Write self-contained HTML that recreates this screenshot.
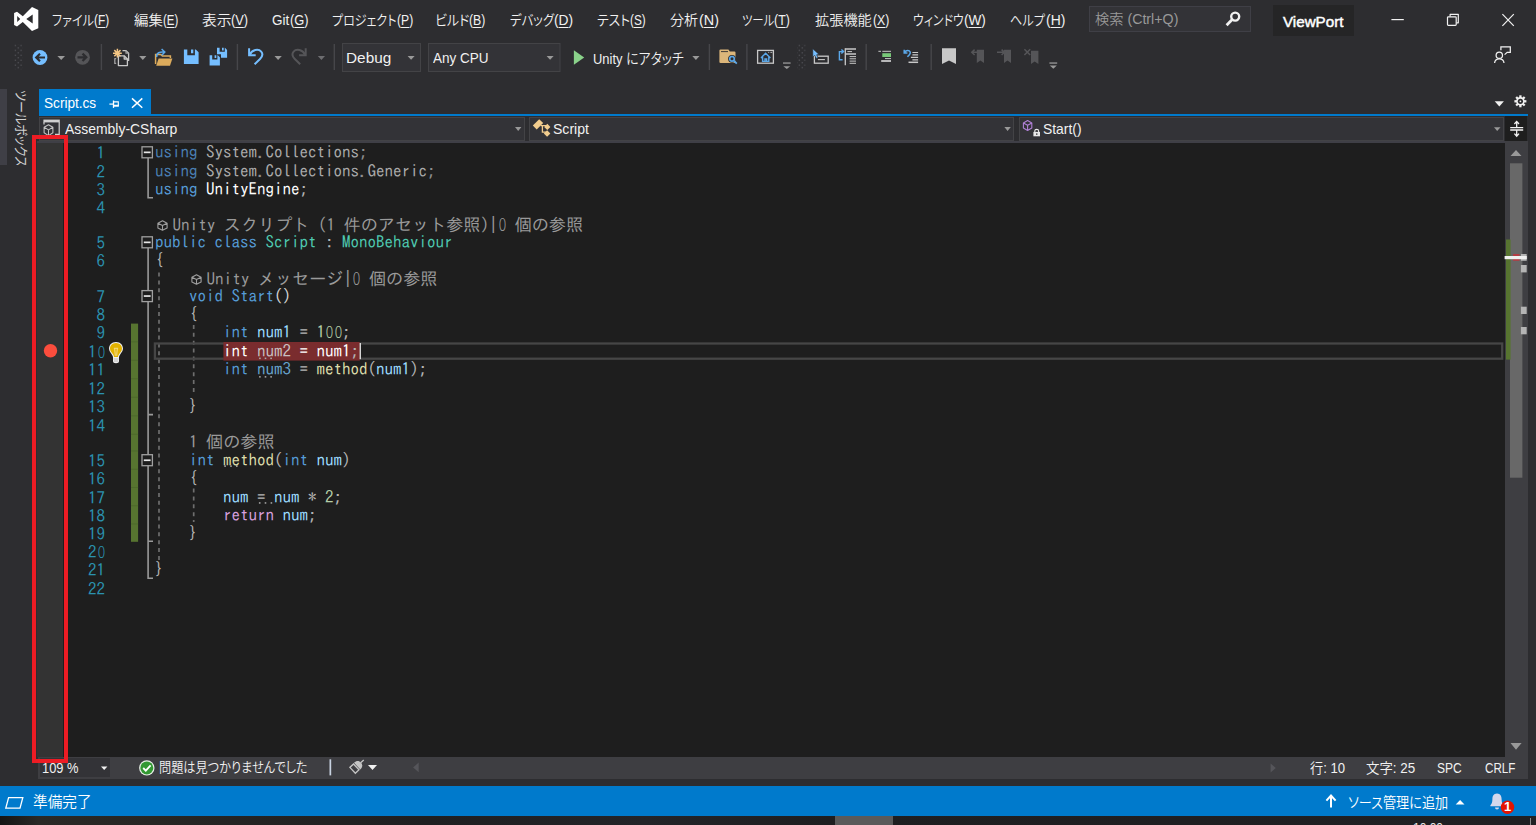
<!DOCTYPE html>
<html lang="ja">
<head>
<meta charset="utf-8">
<title>ViewPort - Microsoft Visual Studio</title>
<style>
*{box-sizing:border-box;margin:0;padding:0}
html,body{width:1536px;height:825px;overflow:hidden;background:#2d2d30}
body{position:relative;font-family:"Liberation Sans","Noto Sans CJK JP",sans-serif;color:#f1f1f1;font-size:15px}
.abs{position:absolute}
/* labels */
.lb{position:absolute;height:22px;line-height:22px;white-space:nowrap;font-feature-settings:"palt" 1;font-weight:350}
.lb span{display:inline-block;transform-origin:0 50%}
.lb u{text-decoration:underline;text-underline-offset:2px;text-decoration-thickness:1px}
/* editor */
#editor{position:absolute;left:37px;top:142.8px;width:1468.3px;height:614.2px;background:#1e1e1e}
#bpmargin{position:absolute;left:37px;top:142.8px;width:26.3px;height:614.2px;background:#333333}
.ln{position:absolute;left:60px;width:45px;text-align:right;font-family:"IPAGothic","Liberation Mono",monospace;font-size:17px;line-height:18.3px;height:18.3px;color:#2b91af;white-space:pre}
.cd{position:absolute;left:155px;font-family:"IPAGothic","Liberation Mono",monospace;font-size:17px;line-height:18.3px;height:18.3px;color:#dcdcdc;white-space:pre}
.cl{position:absolute;font-family:"IPAGothic","Liberation Mono",monospace;font-size:17.12px;line-height:18.3px;height:18.3px;color:#9a9a9a;white-space:pre}
.cl .cube{position:absolute;left:0.3px;top:3.2px}
.z{display:inline-block;width:8.5px;text-align:center;line-height:0}.z i{display:inline-block;font-style:normal;font-family:"Noto Sans CJK JP",sans-serif;font-weight:300;transform:scale(.82,.98)}
.k{color:#569cd6}.t{color:#4ec9b0}.v{color:#9cdcfe}.m{color:#dcdcaa}.ms{color:#569cd6}.n{color:#b5cea8}.p{color:#b4b4b4}.i{color:#ababab}.fk{color:#4b80b4}.fp{color:#8e8e8e}.w{color:#ffffff}.p2{color:#d4d4d4}.r{color:#d8a0df}.f{color:#68a5cf}
.nav{top:116.6px;height:24.6px;background:#333337;border:1.2px solid #434346}
.hl .f{color:#c9c0c1}
</style>
</head>
<body>
<!-- ===== title bar ===== -->
<svg class="abs" style="left:0;top:0" width="50" height="38" viewBox="0 0 50 38"><path fill="#ffffff" fill-rule="evenodd" d="M32 7 L38.3 9.9 V28.2 L32 31 L22.8 21.9 L17 26.5 L14.1 24.9 V12.9 L17 11.8 L22.8 16.2 Z M32.7 14.4 L26.3 19 L32.7 23.6 Z M17.2 16 L20.2 19 L17.2 22.1 Z"/></svg>
<div class="abs" style="left:1089px;top:6px;width:162px;height:26px;background:#333337;border:1px solid #3f3f46"></div>
<svg class="abs" style="left:1224.2px;top:9.6px" width="18" height="18" viewBox="0 0 18 18"><circle cx="11.2" cy="6.6" r="4" fill="none" stroke="#f1f1f1" stroke-width="2.4"/><path d="M8.2 9.6 L2.6 15.2" stroke="#f1f1f1" stroke-width="2.8" stroke-linecap="butt"/></svg>
<div class="abs" style="left:1273px;top:5px;width:81px;height:31px;background:#252526"></div>
<svg class="abs" style="left:1385px;top:8px" width="140" height="24" viewBox="1385 8 140 24"><g fill="none" stroke="#f1f1f1" stroke-width="1.2"><path d="M1391.4 19.6 H1403.8"/><rect x="1447.5" y="16.8" width="8.7" height="8.6" rx="0.8"/><path d="M1450.1 16.6 V14.4 H1458.3 V22.8 H1456.4" stroke-linejoin="round"/><path d="M1502.4 14.2 L1513.8 25.8 M1513.8 14.2 L1502.4 25.8"/></g></svg>
<svg class="abs" style="left:1490px;top:42px" width="26" height="26" viewBox="1490 42 26 26"><g fill="none" stroke="#f1f1f1" stroke-width="1.25"><circle cx="1499.3" cy="55.2" r="3.2"/><path d="M1494.6 63 C1494.8 60 1496.8 58.9 1499.3 58.9 C1501.8 58.9 1503.8 60 1504 63"/><path d="M1500.9 50.2 V46.8 H1510.3 V52.3 H1507.2 L1504.6 54.6"/></g></svg>

<!--TOOLBAR_BEGIN--><!-- ===== toolbar ===== -->
<svg class="abs" style="left:0;top:38px" width="1100" height="40" viewBox="0 38 1100 40">
<defs>
<pattern id="grip" x="14.2" y="44.3" width="5.6" height="4.9" patternUnits="userSpaceOnUse"><rect x="0.6" y="0.6" width="1.3" height="1.3" fill="#505055"/><rect x="3.4" y="3" width="1.3" height="1.3" fill="#505055"/></pattern>
</defs>
<!-- grips -->
<g fill="#505055">
<rect x="14.2" y="44.3" width="8.4" height="25" fill="url(#grip)"/>
<rect x="797" y="44.3" width="8.4" height="25" fill="url(#grip)"/>
</g>
<!-- separators -->
<g fill="#46464a"><rect x="100.7" y="44" width="1.4" height="26"/><rect x="236.7" y="44" width="1.4" height="26"/><rect x="333.6" y="44" width="1.4" height="26"/><rect x="708.7" y="44" width="1.4" height="26"/><rect x="746.2" y="44" width="1.4" height="26"/><rect x="865.5" y="44" width="1.4" height="26"/><rect x="930.5" y="44" width="1.4" height="26"/></g>
<!-- back / forward -->
<circle cx="40" cy="57.5" r="7.4" fill="#75beff"/>
<path d="M45 57.5 H36.6 M40 53.8 L36.2 57.5 L40 61.2" fill="none" stroke="#2d2d30" stroke-width="2.2"/>
<circle cx="82.5" cy="57.3" r="7.4" fill="#555558"/>
<path d="M77.5 57.3 H85.9 M82.5 53.6 L86.3 57.3 L82.5 61" fill="none" stroke="#2d2d30" stroke-width="2.2"/>
<!-- dropdown arrows -->
<g fill="#999999"><path d="M57.4 56 H65 L61.2 59.9 Z"/><path d="M139.2 56 H146.4 L142.8 59.9 Z"/><path d="M274.5 56 H281.8 L278.1 59.9 Z"/><path d="M692.3 56 H699.5 L695.9 59.9 Z"/></g>
<path d="M317.8 56 H325 L321.4 59.9 Z" fill="#6d6d70"/>
<!-- new item -->
<g fill="none" stroke="#c8c8c8" stroke-width="1.3" stroke-linejoin="round"><path d="M122.5 50.6 H126 L128.6 53.2 V61"/><path d="M126 50.6 V53.2 H128.6" stroke="#a0a0a0"/><path d="M118.4 55.8 H124.2 L127.4 59 V65.6 H118.4 Z"/><path d="M124.2 55.8 V59 H127.4"/><path d="M116.2 58.6 H114.8 V63.4 H116.2" stroke="#a0a0a0"/></g>
<g stroke="#f5c684" stroke-width="1.5"><path d="M117.4 48.8 V57.6 M113 53.2 H121.8 M114.3 50.1 L120.5 56.3 M120.5 50.1 L114.3 56.3"/></g>
<!-- open folder -->
<path d="M156.2 65.8 L158.6 58.6 H172.4 L170 65.8 Z" fill="#dcab5c"/>
<path d="M155.6 64 V54.6 H161 L162.4 56 H170.4 V58" fill="none" stroke="#dcab5c" stroke-width="1.5"/>
<path d="M156.8 57 C156 52.8 160 51.6 164.2 52 M161.6 49 L164.8 52 L161.8 55.2" fill="none" stroke="#5ba7e8" stroke-width="1.5"/>
<!-- save -->
<path fill="#75beff" fill-rule="evenodd" d="M183.9 49.4 H195.8 L198.6 52.2 V64 H183.9 Z M187.3 49.4 V55.2 H194.9 V49.4 H193.3 V53.3 H191 V49.4 Z"/>
<!-- save all -->
<path fill="#75beff" fill-rule="evenodd" d="M217 47.8 H225 L227.1 49.9 V57.8 H221 V54.2 H217 Z M219.6 47.8 V51.8 H224.8 V47.8 H223.7 V50.4 H222 V47.8 Z"/>
<path fill="#75beff" fill-rule="evenodd" d="M209.6 55.2 H217.8 L219.9 57.3 V65.4 H209.6 Z M212.2 55.2 V59.4 H217.4 V55.2 H216.3 V58 H214.6 V55.2 Z"/>
<!-- undo / redo -->
<path d="M249.1 48.2 V55.2 H255.7" fill="none" stroke="#75beff" stroke-width="2"/>
<path d="M249.8 54.6 C252 49.6 258.4 48.4 261.2 51.6 C263.4 54.2 262.2 56.8 260 59 L254.6 64.2" fill="none" stroke="#75beff" stroke-width="2"/>
<path d="M305.7 48.2 V55.2 H299.1" fill="none" stroke="#555558" stroke-width="2"/>
<path d="M305 54.6 C302.8 49.6 296.4 48.4 293.6 51.6 C291.4 54.2 292.6 56.8 294.8 59 L300.2 64.2" fill="none" stroke="#555558" stroke-width="2"/>
<!-- combos -->
<rect x="342.5" y="43.5" width="78" height="28" fill="#333337" stroke="#434346"/>
<rect x="428.5" y="43.5" width="131.5" height="28" fill="#333337" stroke="#434346"/>
<path d="M407.6 56 H414.6 L411.1 59.8 Z" fill="#999999"/><path d="M546.6 56 H553.6 L550.1 59.8 Z" fill="#999999"/>
<!-- play -->
<path d="M573.9 50.2 V64.8 L584.2 57.5 Z" fill="#8ad28a"/>
<!-- find in files -->
<path d="M719.4 50.6 Q719.4 49.4 720.6 49.4 H728.4 L729.8 51.4 H734.4 Q735.5 51.4 735.5 52.6 V62 Q735.5 63 734.4 63 H720.6 Q719.4 63 719.4 62 Z" fill="#dcb67a"/>
<path d="M721 51.6 H728" stroke="#2d2d30" stroke-width="0.9"/>
<circle cx="732" cy="58.8" r="3.9" fill="#2d2d30"/>
<circle cx="732" cy="58.8" r="2.3" fill="none" stroke="#5ba7e8" stroke-width="1.6"/><path d="M733.8 60.6 L736.8 63.6" stroke="#5ba7e8" stroke-width="1.8"/>
<!-- home window -->
<rect x="757.6" y="50.4" width="15.8" height="12.8" fill="none" stroke="#c8c8c8" stroke-width="1.3"/>
<path d="M761 58 L765.6 53.2 L770.4 58 M762.6 57 V61.4 H768.8 V57 M765 61.4 V59 H766.6 V61.4" fill="none" stroke="#5ba7e8" stroke-width="1.4"/>
<rect x="768.2" y="51.9" width="1" height="0.9" fill="#c8c8c8"/><rect x="770.4" y="51.9" width="1.8" height="0.9" fill="#c8c8c8"/>
<!-- overflow -->
<g fill="#999999"><rect x="783" y="62.4" width="7.6" height="1.3"/><path d="M783.4 66.2 H790.2 L786.8 69 Z"/><rect x="1049.4" y="62.4" width="7.8" height="1.3"/><path d="M1049.8 65.6 H1056.8 L1053.3 68.8 Z"/></g>
<!-- cursor box -->
<rect x="814.4" y="56.2" width="13.8" height="7" fill="none" stroke="#c8c8c8" stroke-width="1.3"/><path d="M817.9 59.6 H824.9" stroke="#c8c8c8" stroke-width="1.1"/>
<path d="M812.8 48.8 V57 L814.8 55.4 L816.4 58.4 L818 57.6 L816.6 54.8 L819 54.4 Z" fill="#75beff" stroke="#2d2d30" stroke-width="0.6"/>
<!-- list with bracket -->
<g stroke="#c8c8c8" fill="none"><path d="M845.3 48.2 V65.2" stroke-width="1.3"/><path d="M845.3 49 H856 M845.3 54 H856" stroke-width="1.5"/><path d="M847.4 51.6 H852 M849.6 56.6 H856 M849.6 58.8 H856 M849.6 61.1 H856 M849.6 63.3 H856" stroke-width="1"/></g>
<path d="M842.6 59.8 H839.4 V51.6 H843 M841.4 49.6 L843.6 51.6 L841.4 53.6" fill="none" stroke="#5ba7e8" stroke-width="1.4"/>
<!-- indent -->
<g stroke="#c8c8c8"><path d="M878.4 51.3 H881 M882.3 51.3 H891 M885 58.6 H891" stroke-width="1"/><path d="M881.2 61 H891" stroke-width="1.8"/></g><rect x="882.3" y="53.2" width="8.7" height="3.8" fill="#78c878"/>
<!-- undo list -->
<path d="M904.2 49.8 V53 H907.4 M904.6 52.4 C906 49.8 909.4 50 910.2 52 C910.8 53.8 909.4 55 907.4 56.8" fill="none" stroke="#5ba7e8" stroke-width="1.5"/>
<g stroke="#c8c8c8" stroke-width="1.2"><path d="M912.4 52.5 H918.1 M912.4 54.8 H918.1 M910.9 57.3 H918.1 M912.4 59.9 H918.1"/><path d="M908.5 62.3 H918.1" stroke-width="1.5"/></g>
<!-- bookmarks -->
<path d="M942 48.3 H956 V64 L949 60.4 L942 64 Z" fill="#c8c8c8"/>
<g fill="#555558"><path d="M976.8 49.8 H984 V63 L980.4 60.6 L976.8 63 Z"/><path d="M1004 49.8 H1011 V63 L1007.5 60.6 L1004 63 Z"/><path d="M1031 50.8 H1038.4 V64 L1034.7 61.6 L1031 64 Z"/></g>
<g fill="none" stroke="#555558" stroke-width="1.5"><path d="M979 52.3 H972 M974.6 49.6 L971.8 52.3 L974.6 55"/><path d="M997 52.3 H1004.2 M1001.6 49.6 L1004.4 52.3 L1001.6 55"/><path d="M1024.4 49.2 L1030.2 55 M1030.2 49.2 L1024.4 55"/></g>
<path d="M975.4 54 H978.4 V57 H975.4Z M1004.6 49.4 H1002 V52 Z" fill="#2d2d30" opacity="0"/>
</svg>
<!--TOOLBAR_END-->
<!--TABS_BEGIN--><!-- ===== left autohide tab ===== -->
<div class="abs" style="left:0;top:89px;width:7px;height:75.5px;background:#3f3f46"></div>
<!-- ===== document tab ===== -->
<div class="abs" style="left:39px;top:89px;width:112px;height:25px;background:#007acc"></div>
<div class="abs" style="left:39px;top:113.5px;width:1489px;height:2.5px;background:#007acc"></div>
<svg class="abs" style="left:105px;top:95px" width="45" height="18" viewBox="105 95 45 18"><g fill="none" stroke="#ffffff"><path d="M109.4 104.1 H113.3" stroke-width="1.2"/><path d="M113.5 100.5 V107.9" stroke-width="1.3"/><path d="M113.5 101.9 H118.3 V106 H113.5" stroke-width="1.1"/><path d="M113.5 105.6 H118.8" stroke-width="1.7"/><path d="M132 98.4 L142.3 107.8 M142.3 98.4 L132 107.8" stroke-width="1.5"/></g></svg>
<svg class="abs" style="left:1490px;top:94px" width="40" height="16" viewBox="1490 94 40 16"><path d="M1494.7 101.3 H1503.9 L1499.3 106.5 Z" fill="#f1f1f1"/><g transform="translate(1520.4 101.3)"><g fill="#f1f1f1"><rect x="-1.15" y="-6" width="2.3" height="12"/><rect x="-1.15" y="-6" width="2.3" height="12" transform="rotate(45)"/><rect x="-1.15" y="-6" width="2.3" height="12" transform="rotate(90)"/><rect x="-1.15" y="-6" width="2.3" height="12" transform="rotate(135)"/><circle r="4.2"/></g><circle r="2.6" fill="#2d2d30"/><circle r="0.9" fill="#f1f1f1"/></g></svg>
<!-- ===== navigation bar ===== -->
<div class="abs" style="left:37px;top:116px;width:1491px;height:27px;background:#2d2d30"></div>
<div class="abs nav" style="left:39px;width:486.3px"></div>
<div class="abs nav" style="left:529px;width:485.3px"></div>
<div class="abs nav" style="left:1018.5px;width:485.5px"></div>
<div class="abs" style="left:37px;top:140.6px;width:1468.5px;height:2.2px;background:#3f3f46"></div>
<div class="abs" style="left:1505.3px;top:116px;width:22px;height:25.4px;background:#1e1e1e"></div>
<svg class="abs" style="left:1505px;top:116px" width="24" height="26" viewBox="1505 116 24 26"><g fill="none" stroke="#f1f1f1" stroke-width="1.3"><path d="M1510.2 127.6 H1523.2 M1510.2 130 H1523.2"/><path d="M1516.7 127.6 V121.6 M1514.4 124 L1516.7 121.4 L1519 124 M1516.7 130 V136 M1514.4 133.6 L1516.7 136.2 L1519 133.6"/></g></svg>
<svg class="abs" style="left:37px;top:116px" width="1470" height="27" viewBox="37 116 1470 27">
<g fill="#999999"><path d="M515 127 H521.4 L518.2 131 Z"/><path d="M1004.4 127 H1010.8 L1007.6 131 Z"/><path d="M1494 127.2 H1500.5 L1497.2 131.1 Z"/></g>
<!-- assembly icon -->
<rect x="43.4" y="119.6" width="16.4" height="2.8" fill="#d0d0d0"/><path d="M44 122 V124.6 M59.2 122 V134.4 H55" fill="none" stroke="#d0d0d0" stroke-width="1.2"/>
<path d="M48.5 124.8 L52.9 127.3 V132.8 L48.5 135.6 L44.1 132.8 V127.3 Z M44.1 127.3 L48.5 129.9 L52.9 127.3 M48.5 129.9 V135.6" fill="none" stroke="#c4c4c4" stroke-width="1.05" stroke-linejoin="round"/>
<!-- class icon -->
<g fill="#f2cd8e"><path d="M539.2 119.3 L543.2 122.9 L536.7 129.6 L532.8 125.6 Z"/><path d="M547.3 123.8 L550.4 126.9 L547.3 130 L544.2 126.9 Z"/><path d="M547.1 130.3 L550.4 133.5 L547.1 136.8 L543.8 133.5 Z"/></g>
<path d="M540.6 125.6 H546 M542.4 125.6 V132.2 H546" fill="none" stroke="#f2cd8e" stroke-width="1.3"/>
<!-- method icon -->
<g fill="none" stroke="#b180d7" stroke-width="1.1" stroke-linejoin="round"><path d="M1027.6 120.6 L1031.8 122.9 V128 L1027.6 130.4 L1023.4 128 V122.9 Z M1023.4 122.9 L1027.6 125.3 L1031.8 122.9 M1027.6 125.3 V130.4"/></g>
<path d="M1034.8 132 V130.8 Q1034.8 129.4 1036.7 129.4 Q1038.6 129.4 1038.6 130.8 V132" fill="none" stroke="#e8e8e8" stroke-width="1.1"/><rect x="1033.4" y="131.9" width="6.6" height="4.4" fill="#e8e8e8"/><rect x="1036.1" y="133.4" width="1.3" height="1.4" fill="#2d2d30"/>
</svg>
<div class="abs" style="left:6px;top:89px;width:28px;height:76px;overflow:hidden"><div id="tbx" style="position:absolute;left:22px;top:0.6px;transform-origin:0 0;transform:rotate(90deg) scaleX(0.895);white-space:nowrap;font-size:13.5px;line-height:16px;color:#d0d0d0;font-feature-settings:'palt' 1">ツールボックス</div></div>
<!--TABS_END-->
<!-- ===== editor ===== -->
<div id="editor"></div>
<div id="bpmargin"></div>
<!--DECO_BEGIN--><!-- ===== editor decorations ===== -->
<svg class="abs" style="left:37px;top:143px" width="1468" height="614" viewBox="37 143 1468 614">
<!-- change bar -->
<rect x="131" y="323.6" width="7.1" height="218.2" fill="#577430"/><rect x="131" y="341.4" width="7.1" height="0.9" fill="#4d692b"/><rect x="131" y="359.8" width="7.1" height="0.9" fill="#4d692b"/><rect x="131" y="378.3" width="7.1" height="0.9" fill="#4d692b"/><rect x="131" y="396.8" width="7.1" height="0.9" fill="#4d692b"/><rect x="131" y="415.4" width="7.1" height="0.9" fill="#4d692b"/><rect x="131" y="433.8" width="7.1" height="0.9" fill="#4d692b"/><rect x="131" y="450.5" width="7.1" height="0.9" fill="#4d692b"/><rect x="131" y="468.8" width="7.1" height="0.9" fill="#4d692b"/><rect x="131" y="487.1" width="7.1" height="0.9" fill="#4d692b"/><rect x="131" y="505.3" width="7.1" height="0.9" fill="#4d692b"/><rect x="131" y="523.5" width="7.1" height="0.9" fill="#4d692b"/>
<!-- outlining lines -->
<g fill="none" stroke="#9a9a9a" stroke-width="1.6"><path d="M148.1 158 V197.7 H153"/><path d="M148.1 248 V578.2 H153"/><path d="M148.1 414.6 H153 M148.1 541.3 H153"/></g>
<rect x="142" y="146.8" width="10.4" height="11" fill="#1e1e1e" stroke="#a0a0a0" stroke-width="1.3"/><rect x="143.8" y="151.5" width="6.8" height="1.7" fill="#e6e6e6"/><rect x="142" y="236.8" width="10.4" height="11" fill="#1e1e1e" stroke="#a0a0a0" stroke-width="1.3"/><rect x="143.8" y="241.5" width="6.8" height="1.7" fill="#e6e6e6"/><rect x="142" y="290.6" width="10.4" height="11" fill="#1e1e1e" stroke="#a0a0a0" stroke-width="1.3"/><rect x="143.8" y="295.2" width="6.8" height="1.7" fill="#e6e6e6"/><rect x="142" y="454.7" width="10.4" height="11" fill="#1e1e1e" stroke="#a0a0a0" stroke-width="1.3"/><rect x="143.8" y="459.4" width="6.8" height="1.7" fill="#e6e6e6"/>
<!-- indent guides -->
<g fill="none" stroke="#6e6e6e" stroke-width="1.7" stroke-dasharray="4 3.87"><path d="M159 272.6 V562"/><path d="M193.7 325 V393"/><path d="M193.7 488.6 V522"/></g>
<!-- current line -->
<rect x="154.9" y="343.5" width="1347.3" height="15.2" fill="none" stroke="#464646" stroke-width="2.3"/>
<rect x="223.4" y="342" width="136.4" height="18.6" fill="#7a2c2e"/>
<!-- breakpoint -->
<circle cx="50.5" cy="350.7" r="6.7" fill="#fb4d3d"/>
<!-- lightbulb -->
<g><path d="M116 342 C111.4 342 109 345.4 109 348.6 C109 351.4 110.6 352.8 111.8 354.4 C112.8 355.8 113 356.6 113 357.6 V361 Q113 363.2 116 363.2 Q119 363.2 119 361 V357.6 C119 356.6 119.2 355.8 120.2 354.4 C121.4 352.8 123 351.4 123 348.6 C123 345.4 120.6 342 116 342 Z" fill="#efefef"/><path d="M116 343 C112.2 343 110 345.8 110 348.6 C110 351 111.4 352.2 112.6 353.8 C113.6 355.2 114 356 114 357 H118 C118 356 118.4 355.2 119.4 353.8 C120.6 352.2 122 351 122 348.6 C122 345.8 119.8 343 116 343 Z" fill="#e2b200"/><path d="M113.9 348.3 H118.1 M114.7 348.5 L115.3 355.8 M117.3 348.5 L116.7 355.8" stroke="#f6df8c" stroke-width="1" fill="none"/><path d="M113.6 359 H118.4 M114 361 H118" stroke="#b0b0b0" stroke-width="0.8"/></g>
<!-- suggestion dots -->
<g fill="#aaaaaa"><rect x="259.1" y="357.6" width="1.6" height="1.5"/><rect x="264.7" y="357.6" width="1.6" height="1.5"/><rect x="270.3" y="357.6" width="1.6" height="1.5"/><rect x="259.1" y="376.1" width="1.6" height="1.5"/><rect x="264.7" y="376.1" width="1.6" height="1.5"/><rect x="270.3" y="376.1" width="1.6" height="1.5"/><rect x="224.3" y="465.4" width="1.6" height="1.5"/><rect x="230.2" y="465.4" width="1.6" height="1.5"/><rect x="236.0" y="465.4" width="1.6" height="1.5"/><rect x="258.9" y="502.2" width="1.6" height="1.5"/><rect x="264.7" y="502.2" width="1.6" height="1.5"/><rect x="270.6" y="502.2" width="1.6" height="1.5"/></g>
<!-- caret -->
<rect x="359.6" y="343" width="1.3" height="16.2" fill="#e8e8e8"/>
</svg>
<!--DECO_END-->
<div class="ln" style="top:144.35px">1</div>
<div class="cd" style="top:143.35px"><span class="fk">using</span> <span class="i">System</span><span class="fp">.</span><span class="i">Collections</span><span class="fp">;</span></div>
<div class="ln" style="top:162.75px">2</div>
<div class="cd" style="top:161.75px"><span class="fk">using</span> <span class="i">System</span><span class="fp">.</span><span class="i">Collections</span><span class="fp">.</span><span class="i">Generic</span><span class="fp">;</span></div>
<div class="ln" style="top:181.05px">3</div>
<div class="cd" style="top:180.05px"><span class="k">using</span> <span class="w">UnityEngine</span><span class="p">;</span></div>
<div class="ln" style="top:199.15px">4</div>
<div class="ln" style="top:234.25px">5</div>
<div class="cd" style="top:233.25px"><span class="k">public</span> <span class="k">class</span> <span class="t">Script</span> <span class="p">:</span> <span class="t">MonoBehaviour</span></div>
<div class="ln" style="top:252.45px">6</div>
<div class="cd" style="top:251.45px"><span class="p">{</span></div>
<div class="ln" style="top:287.65px">7</div>
<div class="cd" style="top:286.65px">    <span class="k">void</span> <span class="ms">Start</span><span class="p2">()</span></div>
<div class="ln" style="top:305.85px">8</div>
<div class="cd" style="top:304.85px">    <span class="p">{</span></div>
<div class="ln" style="top:324.45px">9</div>
<div class="cd" style="top:323.45px">        <span class="k">int</span> <span class="v">num1</span> <span class="p">=</span> <span class="n">1<span class="z"><i>0</i></span><span class="z"><i>0</i></span></span><span class="p">;</span></div>
<div class="ln" style="top:342.85px">1<span class="z"><i>0</i></span></div>
<div class="cd" style="top:341.85px">        <span class="hl"><span class="w">int</span> <span class="f">num2</span> <span class="w">=</span> <span class="w">num1</span><span class="p">;</span></span></div>
<div class="ln" style="top:361.35px">11</div>
<div class="cd" style="top:360.35px">        <span class="k">int</span> <span class="f">num3</span> <span class="p">=</span> <span class="m">method</span><span class="p">(</span><span class="v">num1</span><span class="p">)</span><span class="p">;</span></div>
<div class="ln" style="top:379.85px">12</div>
<div class="ln" style="top:398.35px">13</div>
<div class="cd" style="top:397.35px">    <span class="p">}</span></div>
<div class="ln" style="top:416.95px">14</div>
<div class="ln" style="top:451.95px">15</div>
<div class="cd" style="top:450.95px">    <span class="k">int</span> <span class="m">method</span><span class="p">(</span><span class="k">int</span> <span class="v">num</span><span class="p">)</span></div>
<div class="ln" style="top:470.15px">16</div>
<div class="cd" style="top:469.15px">    <span class="p">{</span></div>
<div class="ln" style="top:488.55px">17</div>
<div class="cd" style="top:487.55px">        <span class="v">num</span> <span class="p">=</span> <span class="v">num</span> <span class="p">*</span> <span class="n">2</span><span class="p">;</span></div>
<div class="ln" style="top:506.75px">18</div>
<div class="cd" style="top:505.75px">        <span class="r">return</span> <span class="v">num</span><span class="p">;</span></div>
<div class="ln" style="top:524.95px">19</div>
<div class="cd" style="top:523.95px">    <span class="p">}</span></div>
<div class="ln" style="top:543.15px">2<span class="z"><i>0</i></span></div>
<div class="ln" style="top:561.45px">21</div>
<div class="cd" style="top:560.45px"><span class="p">}</span></div>
<div class="ln" style="top:579.75px">22</div>
<div class="cl" style="top:216.05px;left:155.5px"><svg class="cube" width="13" height="13" viewBox="0 0 13 13"><path d="M6.5 1.8 L11.1 4.2 V8.9 L6.5 11.2 L1.9 8.9 V4.2 Z M1.9 4.2 L6.5 6.6 L11.1 4.2 M6.5 6.6 V11.2" fill="none" stroke="#a0a0a0" stroke-width="1.1" stroke-linejoin="round"/></svg><span style="margin-left:17px">Unity スクリプト (1 件のアセット参照)|<span class="z"><i>0</i></span> 個の参照</span></div>
<div class="cl" style="top:269.65px;left:189.5px"><svg class="cube" width="13" height="13" viewBox="0 0 13 13"><path d="M6.5 1.8 L11.1 4.2 V8.9 L6.5 11.2 L1.9 8.9 V4.2 Z M1.9 4.2 L6.5 6.6 L11.1 4.2 M6.5 6.6 V11.2" fill="none" stroke="#a0a0a0" stroke-width="1.1" stroke-linejoin="round"/></svg><span style="margin-left:17px">Unity メッセージ|<span class="z"><i>0</i></span> 個の参照</span></div>
<div class="cl" style="top:433.35px;left:189px">1 個の参照</div>
<!--SCROLL_BEGIN--><!-- ===== vertical scrollbar ===== -->
<div class="abs" style="left:1505.3px;top:141.4px;width:22.8px;height:615.6px;background:#3e3e42"></div>
<svg class="abs" style="left:1503px;top:142px" width="26" height="615" viewBox="1503 142 26 615">
<rect x="1510" y="163.3" width="12.4" height="314.4" fill="#686868"/>
<path d="M1510.5 156 L1516 150 L1521.5 156 Z" fill="#999999"/><path d="M1510.5 743 H1521.6 L1516 749.7 Z" fill="#999999"/>
<rect x="1506" y="239.5" width="4.6" height="120.1" fill="#577430"/>
<g fill="#b4b4b4"><rect x="1520.9" y="254" width="5.8" height="6.8"/><rect x="1520.9" y="265" width="5.8" height="7.4"/><rect x="1520.9" y="306.7" width="5.8" height="7.3"/><rect x="1520.9" y="327" width="5.8" height="7.3"/></g>
<rect x="1513" y="254" width="6.5" height="6.8" fill="#b43c44"/>
<rect x="1504.6" y="256" width="22.2" height="3.2" fill="#f0f0f0"/>
</svg>
<!--SCROLL_END-->
<!--BOTTOM_BEGIN--><!-- ===== editor bottom bar ===== -->
<div class="abs" style="left:37.5px;top:757px;width:1490.6px;height:22.2px;background:#3e3e42"></div>
<div class="abs" style="left:39.8px;top:758.2px;width:70.2px;height:18.6px;background:#333337"></div>
<svg class="abs" style="left:37px;top:757px" width="1491" height="23" viewBox="37 757 1491 23">
<path d="M101 766.5 H107.4 L104.2 770 Z" fill="#f1f1f1"/>
<circle cx="146.8" cy="767.9" r="7.7" fill="#e8f0e8"/><circle cx="146.8" cy="767.9" r="6.5" fill="#339933"/><path d="M143.2 768 L145.8 770.6 L150.6 765.4" fill="none" stroke="#ffffff" stroke-width="1.8"/>
<rect x="329.5" y="759.3" width="1.7" height="16.1" fill="#c8d2e1"/>
<g transform="translate(357 766.2) rotate(47)"><path d="M0 -9.2 V-5" stroke="#c4c4c4" stroke-width="1.3" fill="none"/><path d="M-4.6 -0.2 C-4.6 -3.8 -2.6 -5.4 0 -5.4 C2.6 -5.4 4.6 -3.8 4.6 -0.2 Z" fill="#c4c4c4"/><rect x="-4" y="1" width="8" height="5" fill="none" stroke="#c4c4c4" stroke-width="1.3"/></g>
<path d="M368 765 H377 L372.5 770 Z" fill="#f1f1f1"/>
<path d="M418.7 762.5 V772.2 L413.1 767.4 Z" fill="#55555a"/><path d="M1270.6 763.4 V772.4 L1275.8 767.9 Z" fill="#55555a"/>
</svg>
<!-- ===== status bar ===== -->
<div class="abs" style="left:0;top:786.4px;width:1536px;height:29.6px;background:#007acc"></div>
<svg class="abs" style="left:0;top:786px" width="1536" height="30" viewBox="0 786 1536 30">
<path d="M8.6 797.6 H22.8 L20 808.2 H5.8 Z" fill="none" stroke="#ffffff" stroke-width="1.3"/>
<path d="M1331 807.6 V796 M1326.4 800.6 L1331 795.6 L1335.6 800.6" fill="none" stroke="#ffffff" stroke-width="2"/>
<path d="M1455.7 804.5 H1464.5 L1460.1 800 Z" fill="#ffffff"/>
<path d="M1497 793.6 C1493.6 793.6 1492.4 796.4 1492.4 799.2 C1492.4 802.4 1491.6 803.8 1490.4 805.2 V806.2 H1503.6 V805.2 C1502.4 803.8 1501.6 802.4 1501.6 799.2 C1501.6 796.4 1500.4 793.6 1497 793.6 Z M1495 807.4 A2 2 0 0 0 1499 807.4 Z" fill="#d4d8ec"/>
<circle cx="1507.5" cy="807.3" r="6.7" fill="#e51400"/>
</svg>
<div class="abs" style="left:1503.6px;top:800.1px;width:8px;height:14px;line-height:14px;font-size:13px;font-weight:bold;color:#fff;text-align:center">1</div>
<!-- ===== taskbar strip ===== -->
<div class="abs" style="left:0;top:816px;width:1536px;height:9px;background:linear-gradient(90deg,#151515 0,#2a2926 2.5%,#272624 10%,#1f1f21 28%,#232428 42%,#1e1e20 54%,#202023 100%)"></div>
<div class="abs" style="left:1408px;top:823.2px;width:40px;height:1.8px;overflow:hidden;font-size:12px;line-height:12px;color:#e8e8e8;text-align:center"><span style="position:relative;top:-1.6px">10:00</span></div>
<div class="abs" style="left:835px;top:816px;width:58px;height:9px;background:#5a5a5a"></div>
<div class="abs" style="left:1529.5px;top:818px;width:1.2px;height:7px;background:#8a8a8a"></div>
<!--BOTTOM_END-->
<div class="lb" id="m1a" style="left:51.64px;top:9.00px;font-size:14px;color:#f1f1f1;"><span style="transform:scaleX(0.8638)">ファイル</span></div>
<div class="lb" id="m1b" style="left:93.98px;top:9.30px;font-size:14.5px;color:#f1f1f1;"><span style="transform:scaleX(0.8176)">(<u>F</u>)</span></div>
<div class="lb" id="m2a" style="left:133.80px;top:9.00px;font-size:14px;color:#f1f1f1;"><span style="transform:scaleX(1.0296)">編集</span></div>
<div class="lb" id="m2b" style="left:162.51px;top:9.30px;font-size:14.5px;color:#f1f1f1;"><span style="transform:scaleX(0.7889)">(<u>E</u>)</span></div>
<div class="lb" id="m3a" style="left:201.95px;top:9.00px;font-size:14px;color:#f1f1f1;"><span style="transform:scaleX(1.0538)">表示</span></div>
<div class="lb" id="m3b" style="left:231.22px;top:9.30px;font-size:14.5px;color:#f1f1f1;"><span style="transform:scaleX(0.8833)">(<u>V</u>)</span></div>
<div class="lb" id="m4a" style="left:272.04px;top:9.00px;font-size:14px;color:#f1f1f1;"><span style="transform:scaleX(0.9647)">Git</span></div>
<div class="lb" id="m4b" style="left:290.21px;top:9.30px;font-size:14.5px;color:#f1f1f1;"><span style="transform:scaleX(0.8895)">(<u>G</u>)</span></div>
<div class="lb" id="m5a" style="left:332.14px;top:9.00px;font-size:14px;color:#f1f1f1;"><span style="transform:scaleX(0.8589)">プロジェクト</span></div>
<div class="lb" id="m5b" style="left:396.56px;top:9.30px;font-size:14.5px;color:#f1f1f1;"><span style="transform:scaleX(0.8389)">(<u>P</u>)</span></div>
<div class="lb" id="m6a" style="left:435.14px;top:9.00px;font-size:14px;color:#f1f1f1;"><span style="transform:scaleX(0.9294)">ビルド</span></div>
<div class="lb" id="m6b" style="left:469.46px;top:9.30px;font-size:14.5px;color:#f1f1f1;"><span style="transform:scaleX(0.8444)">(<u>B</u>)</span></div>
<div class="lb" id="m7a" style="left:509.62px;top:9.00px;font-size:14px;color:#f1f1f1;"><span style="transform:scaleX(0.8816)">デバッグ</span></div>
<div class="lb" id="m7b" style="left:554.45px;top:9.30px;font-size:14.5px;color:#f1f1f1;"><span style="transform:scaleX(0.9500)">(<u>D</u>)</span></div>
<div class="lb" id="m8a" style="left:597.08px;top:9.00px;font-size:14px;color:#f1f1f1;"><span style="transform:scaleX(0.9176)">テスト</span></div>
<div class="lb" id="m8b" style="left:630.09px;top:9.30px;font-size:14.5px;color:#f1f1f1;"><span style="transform:scaleX(0.8111)">(<u>S</u>)</span></div>
<div class="lb" id="m9a" style="left:670.00px;top:9.00px;font-size:14px;color:#f1f1f1;"><span style="transform:scaleX(1.0000)">分析</span></div>
<div class="lb" id="m9b" style="left:698.71px;top:9.30px;font-size:14.5px;color:#f1f1f1;"><span style="transform:scaleX(0.9889)">(<u>N</u>)</span></div>
<div class="lb" id="m10a" style="left:741.69px;top:9.00px;font-size:14px;color:#f1f1f1;"><span style="transform:scaleX(0.8105)">ツール</span></div>
<div class="lb" id="m10b" style="left:774.15px;top:9.30px;font-size:14.5px;color:#f1f1f1;"><span style="transform:scaleX(0.8529)">(<u>T</u>)</span></div>
<div class="lb" id="m11a" style="left:815.00px;top:9.00px;font-size:14px;color:#f1f1f1;"><span style="transform:scaleX(1.0143)">拡張機能</span></div>
<div class="lb" id="m11b" style="left:872.65px;top:9.30px;font-size:14.5px;color:#f1f1f1;"><span style="transform:scaleX(0.8500)">(<u>X</u>)</span></div>
<div class="lb" id="m12a" style="left:912.95px;top:9.00px;font-size:14px;color:#f1f1f1;"><span style="transform:scaleX(0.8517)">ウィンドウ</span></div>
<div class="lb" id="m12b" style="left:963.96px;top:9.30px;font-size:14.5px;color:#f1f1f1;"><span style="transform:scaleX(0.9364)">(<u>W</u>)</span></div>
<div class="lb" id="m13a" style="left:1010.13px;top:9.00px;font-size:14px;color:#f1f1f1;"><span style="transform:scaleX(0.8667)">ヘルプ</span></div>
<div class="lb" id="m13b" style="left:1045.54px;top:9.30px;font-size:14.5px;color:#f1f1f1;"><span style="transform:scaleX(0.9611)">(<u>H</u>)</span></div>
<div class="lb" id="srch" style="left:1094.98px;top:8.20px;font-size:14px;color:#999999;"><span style="transform:scaleX(1.0160)">検索 (Ctrl+Q)</span></div>
<div class="lb" id="vp" style="left:1282.80px;top:10.90px;font-size:14.5px;color:#ffffff;-webkit-text-stroke:0.45px #ffffff"><span style="transform:scaleX(1.0466)">ViewPort</span></div>
<div class="lb" id="dbg" style="left:345.98px;top:47.25px;font-size:15px;color:#f1f1f1;"><span style="transform:scaleX(1.0238)">Debug</span></div>
<div class="lb" id="cpu" style="left:433.00px;top:46.75px;font-size:15px;color:#f1f1f1;"><span style="transform:scaleX(0.9016)">Any CPU</span></div>
<div class="lb" id="uni" style="left:593.11px;top:47.75px;font-size:14.5px;color:#f1f1f1;"><span style="transform:scaleX(0.8911)">Unity にアタッチ</span></div>
<div class="lb" id="tab" style="left:43.59px;top:92.10px;font-size:15px;color:#ffffff;"><span style="transform:scaleX(0.9071)">Script.cs</span></div>
<div class="lb" id="nav1" style="left:64.50px;top:117.80px;font-size:15px;color:#f1f1f1;"><span style="transform:scaleX(0.9292)">Assembly-CSharp</span></div>
<div class="lb" id="nav2" style="left:553.06px;top:117.80px;font-size:15px;color:#f1f1f1;"><span style="transform:scaleX(0.9368)">Script</span></div>
<div class="lb" id="nav3" style="left:1042.88px;top:118.40px;font-size:15px;color:#f1f1f1;"><span style="transform:scaleX(0.9250)">Start()</span></div>
<div class="lb" id="zoom" style="left:42.11px;top:757.20px;font-size:14.5px;color:#f1f1f1;"><span style="transform:scaleX(0.8875)">109 %</span></div>
<div class="lb" id="noiss" style="left:159.10px;top:757.30px;font-size:13.5px;color:#f1f1f1;"><span style="transform:scaleX(0.9018)">問題は見つかりませんでした</span></div>
<div class="lb" id="row" style="left:1310.20px;top:757.20px;font-size:14px;color:#f1f1f1;"><span style="transform:scaleX(0.9378)">行: 10</span></div>
<div class="lb" id="col" style="left:1366.14px;top:757.20px;font-size:14px;color:#f1f1f1;"><span style="transform:scaleX(0.9580)">文字: 25</span></div>
<div class="lb" id="spc" style="left:1436.94px;top:757.10px;font-size:14px;color:#f1f1f1;"><span style="transform:scaleX(0.8593)">SPC</span></div>
<div class="lb" id="crlf" style="left:1484.87px;top:757.10px;font-size:14px;color:#f1f1f1;"><span style="transform:scaleX(0.8343)">CRLF</span></div>
<div class="lb" id="rdy" style="left:33.39px;top:791.45px;font-size:14.5px;color:#ffffff;"><span style="transform:scaleX(1.0109)">準備完了</span></div>
<div class="lb" id="srcc" style="left:1347.79px;top:792.00px;font-size:14.5px;color:#ffffff;"><span style="transform:scaleX(0.9064)">ソース管理に追加</span></div>
<!-- red annotation rectangle -->
<div class="abs" style="left:32.2px;top:135px;width:35.6px;height:628.4px;border:4.3px solid #ed1c24"></div>
</body>
</html>
